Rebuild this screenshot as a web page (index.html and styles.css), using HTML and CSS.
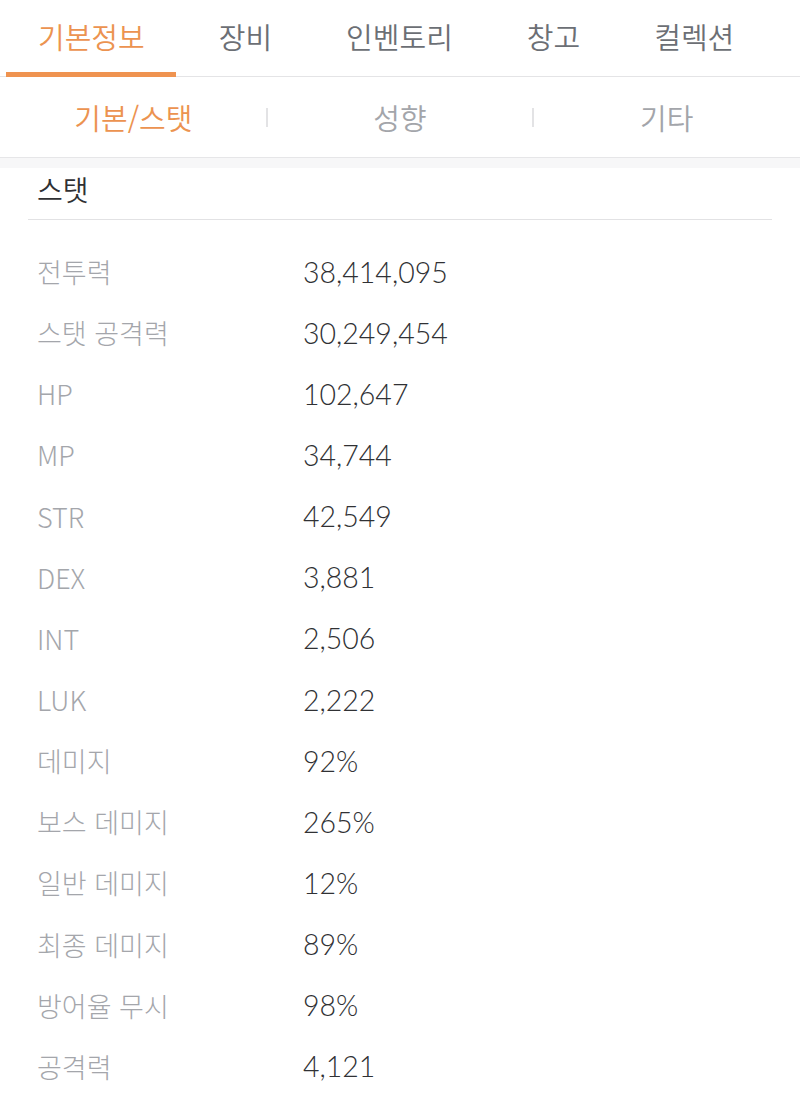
FILE: index.html
```html
<!DOCTYPE html>
<html lang="ko">
<head>
  <meta charset="UTF-8">
  <meta name="viewport" content="width=device-width, initial-scale=1.0">
  <title>캐릭터 정보</title>
  <link rel="stylesheet" href="styles.css">
</head>
<body>
  <!-- 상단 탭 -->
  <nav class="main-tabs">
    <a class="tab active">기본정보</a>
    <a class="tab">장비</a>
    <a class="tab">인벤토리</a>
    <a class="tab">창고</a>
    <a class="tab">컬렉션</a>
  </nav>

  <!-- 하위 탭 -->
  <div class="sub-tabs">
    <a class="sub-tab active">기본/스탯</a>
    <a class="sub-tab">성향</a>
    <a class="sub-tab">기타</a>
  </div>
  <div class="band"></div>

  <section class="stats">
    <h3 class="stats-title">스탯</h3>
    <dl class="stat-list">
      <div class="stat-row"><dt>전투력</dt><dd>38,414,095</dd></div>
      <div class="stat-row"><dt>스탯 공격력</dt><dd>30,249,454</dd></div>
      <div class="stat-row"><dt>HP</dt><dd>102,647</dd></div>
      <div class="stat-row"><dt>MP</dt><dd>34,744</dd></div>
      <div class="stat-row"><dt>STR</dt><dd>42,549</dd></div>
      <div class="stat-row"><dt>DEX</dt><dd>3,881</dd></div>
      <div class="stat-row"><dt>INT</dt><dd>2,506</dd></div>
      <div class="stat-row"><dt>LUK</dt><dd>2,222</dd></div>
      <div class="stat-row"><dt>데미지</dt><dd>92%</dd></div>
      <div class="stat-row"><dt>보스 데미지</dt><dd>265%</dd></div>
      <div class="stat-row"><dt>일반 데미지</dt><dd>12%</dd></div>
      <div class="stat-row"><dt>최종 데미지</dt><dd>89%</dd></div>
      <div class="stat-row"><dt>방어율 무시</dt><dd>98%</dd></div>
      <div class="stat-row"><dt>공격력</dt><dd>4,121</dd></div>
    </dl>
  </section>
</body>
</html>
```

FILE: styles.css
```css
body {
  margin: 0;
  font-family: "Noto Sans CJK KR", "Noto Sans", sans-serif;
  background-color: #fff;
  color: #333;
}
a {
  text-decoration: none;
  cursor: pointer;
}

/* 상단 탭 */
.main-tabs {
  display: flex;
  gap: 10.5px;
  padding-left: 6px;
  border-bottom: 1px solid #e4e4e6;
}
.tab {
  height: 72px;
  padding: 0 31.5px 0 32px;
  display: flex;
  align-items: center;
  font-size: 29px;
  font-weight: 350;
  color: #6c6f75;
  border-bottom: 5px solid transparent;
  margin-bottom: -1px;
}
.tab.active {
  color: #ec9350;
  border-bottom-color: #ef9350;
}

/* 하위 탭 */
.sub-tabs {
  display: grid;
  grid-template-columns: repeat(3, 1fr);
  height: 80px;
  border-bottom: 1px solid #e6e6e8;
}
.sub-tab {
  position: relative;
  display: flex;
  align-items: center;
  justify-content: center;
  font-size: 29px;
  font-weight: 350;
  color: #a3a5aa;
}
.sub-tab.active {
  color: #ec9350;
}
.sub-tab + .sub-tab::before {
  content: "";
  position: absolute;
  left: -1px;
  top: 31px;
  width: 2px;
  height: 19px;
  background: #e3e3e5;
}
.band {
  height: 10px;
  background: #f7f7f8;
}

/* 스탯 */
.stats {
  padding: 0 28px;
}
.stats-title {
  margin: 0;
  height: 42px;
  padding: 0 0 9px 9px;
  display: flex;
  align-items: center;
  font-size: 28px;
  font-weight: 350;
  color: #2f3033;
  border-bottom: 1px solid #e2e2e4;
}
.stat-list {
  margin: 0;
  padding-top: 21px;
}
.stat-row {
  display: flex;
  align-items: center;
  height: 61.15px;
  padding-left: 9px;
}
.stat-row dt {
  width: 266px;
  font-size: 27px;
  font-weight: 300;
  color: #a4a6ab;
}
.stat-row dd {
  margin: 0;
  font-family: Lato, sans-serif;
  font-size: 28.5px;
  font-weight: 300;
  color: #303134;
}
```
